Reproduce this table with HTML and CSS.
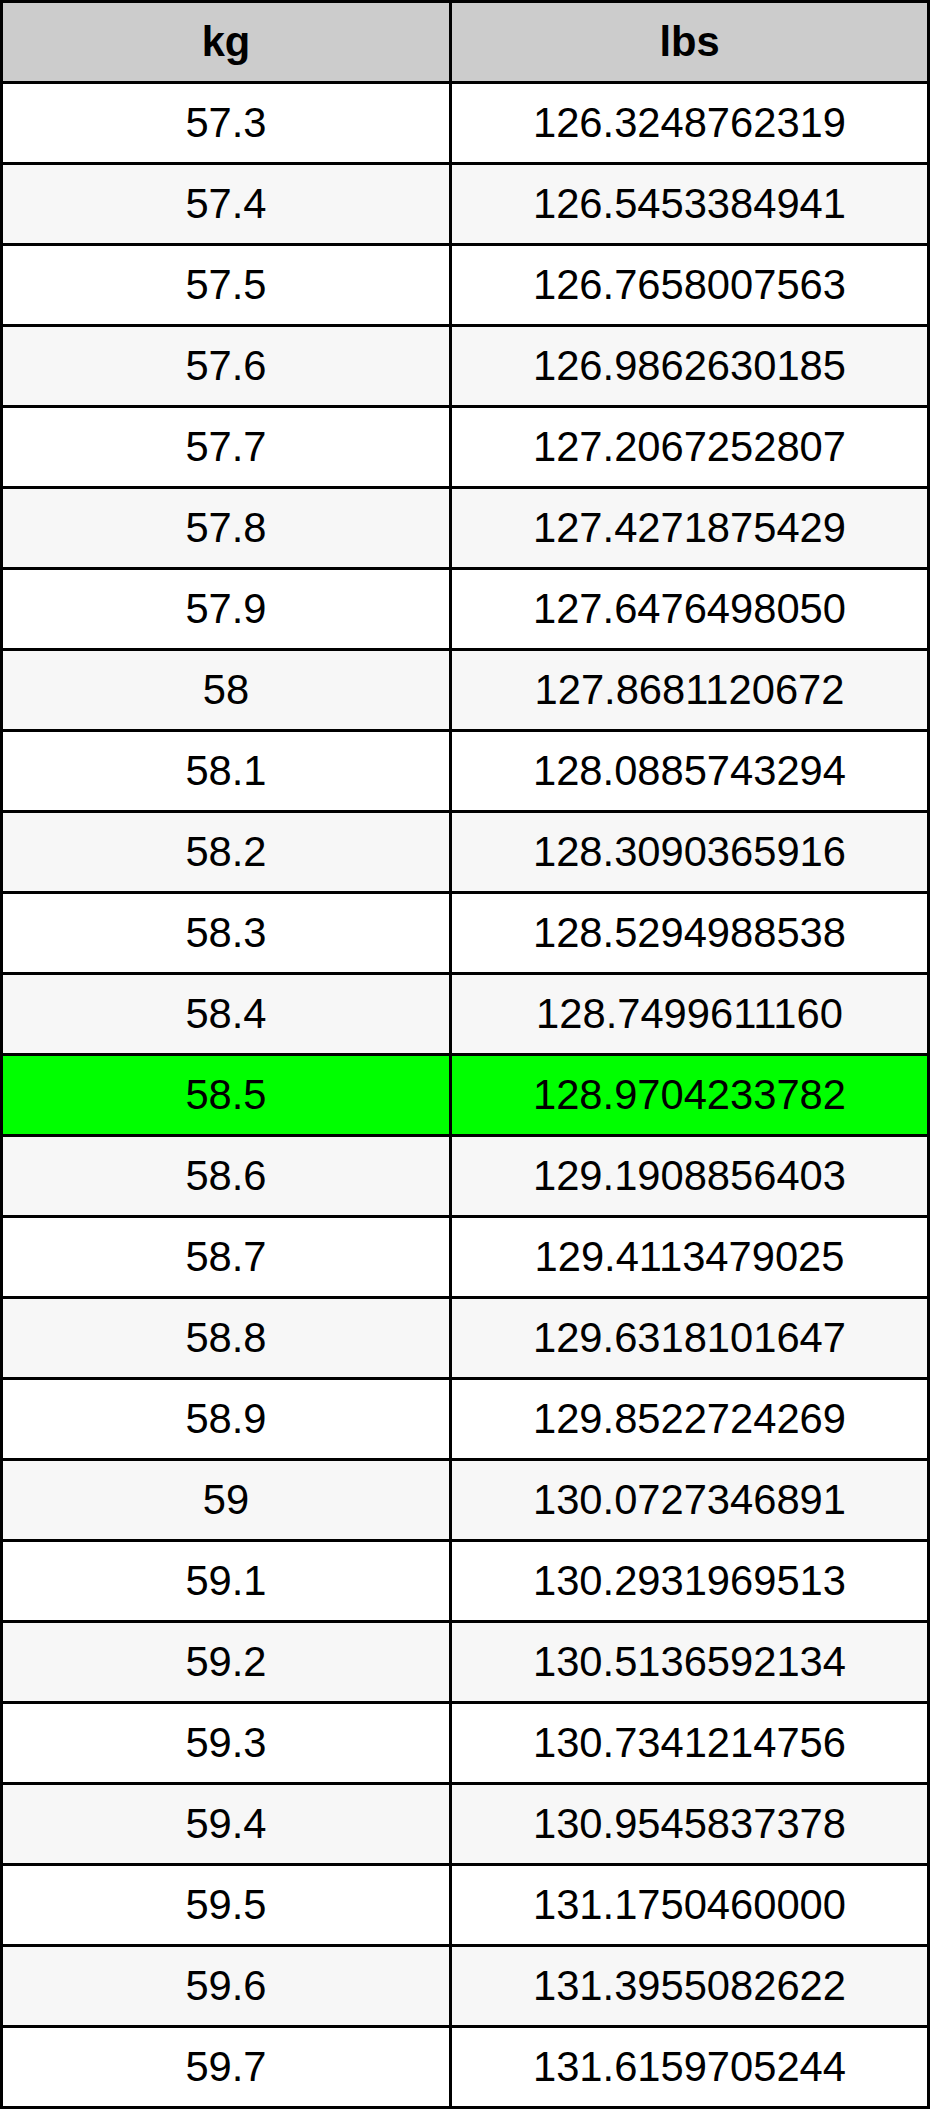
FILE: index.html
```html
<!DOCTYPE html>
<html>
<head>
<meta charset="utf-8">
<link rel="stylesheet" href="styles.css">
</head>
<body>
<div class="table">
  <div class="cell head">kg</div><div class="cell head">lbs</div>
  <div class="cell">57.3</div><div class="cell">126.3248762319</div>
  <div class="cell alt">57.4</div><div class="cell alt">126.5453384941</div>
  <div class="cell">57.5</div><div class="cell">126.7658007563</div>
  <div class="cell alt">57.6</div><div class="cell alt">126.9862630185</div>
  <div class="cell">57.7</div><div class="cell">127.2067252807</div>
  <div class="cell alt">57.8</div><div class="cell alt">127.4271875429</div>
  <div class="cell">57.9</div><div class="cell">127.6476498050</div>
  <div class="cell alt">58</div><div class="cell alt">127.8681120672</div>
  <div class="cell">58.1</div><div class="cell">128.0885743294</div>
  <div class="cell alt">58.2</div><div class="cell alt">128.3090365916</div>
  <div class="cell">58.3</div><div class="cell">128.5294988538</div>
  <div class="cell alt">58.4</div><div class="cell alt">128.7499611160</div>
  <div class="cell hl">58.5</div><div class="cell hl">128.9704233782</div>
  <div class="cell alt">58.6</div><div class="cell alt">129.1908856403</div>
  <div class="cell">58.7</div><div class="cell">129.4113479025</div>
  <div class="cell alt">58.8</div><div class="cell alt">129.6318101647</div>
  <div class="cell">58.9</div><div class="cell">129.8522724269</div>
  <div class="cell alt">59</div><div class="cell alt">130.0727346891</div>
  <div class="cell">59.1</div><div class="cell">130.2931969513</div>
  <div class="cell alt">59.2</div><div class="cell alt">130.5136592134</div>
  <div class="cell">59.3</div><div class="cell">130.7341214756</div>
  <div class="cell alt">59.4</div><div class="cell alt">130.9545837378</div>
  <div class="cell">59.5</div><div class="cell">131.1750460000</div>
  <div class="cell alt">59.6</div><div class="cell alt">131.3955082622</div>
  <div class="cell">59.7</div><div class="cell">131.6159705244</div>
</div>
</body>
</html>
```
FILE: styles.css
```css
html, body {
  margin: 0;
  padding: 0;
  background: #ffffff;
}
.table {
  display: grid;
  grid-template-columns: 446px 475px;
  grid-auto-rows: 78px;
  gap: 3px;
  padding: 3px;
  background: #000000;
  width: 930px;
  box-sizing: border-box;
  font-family: "Liberation Sans", Arial, sans-serif;
  font-size: 41.7px;
  color: #000000;
}
.cell {
  background: #ffffff;
  display: flex;
  align-items: center;
  justify-content: center;
  padding-bottom: 1px;
  box-sizing: border-box;
}
.cell.alt {
  background: #f7f7f7;
}
.cell.head {
  background: #cccccc;
  font-weight: bold;
}
.cell.hl {
  background: #00ff00;
}
```
